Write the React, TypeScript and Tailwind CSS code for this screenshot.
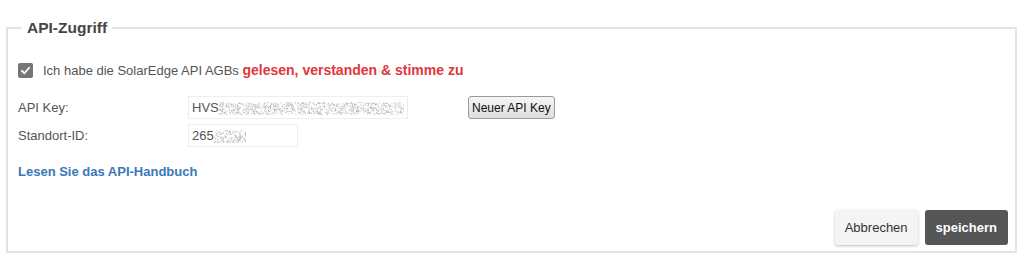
import React from "react";

// deterministic grey speckle used to hide the secret parts of the values
function Noise({ width, height, seed }: { width: number; height: number; seed: number }) {
  let s = seed;
  const rnd = () => {
    s = (s * 9301 + 49297) % 233280;
    return s / 233280;
  };
  const dots: React.ReactNode[] = [];
  const count = Math.round(width * height * 0.38);
  for (let i = 0; i < count; i++) {
    const x = rnd() * width;
    const y = 2 + rnd() * (height - 4);
    const g = Math.round(160 + rnd() * 85);
    dots.push(<rect key={i} x={x.toFixed(1)} y={y.toFixed(1)} width="1" height="1" fill={`rgb(${g},${g},${g})`} />);
  }
  return (
    <svg width={width} height={height} viewBox={`0 0 ${width} ${height}`} aria-hidden className="shrink-0">
      {dots}
    </svg>
  );
}

const App = () => {
  return (
    <div className="h-[262px] w-[1024px] bg-white pl-[6px] pr-[7px] pt-[16px] font-['Liberation_Sans',Arial,sans-serif] text-[13px] text-[#555]">
      <fieldset className="h-[237px] border-2 border-[#e3e3e3] pl-[10px] pr-[7px] pt-[21px]">
        <legend className="ml-[4px] px-[5px] text-[15.5px] font-bold text-[#444]">API-Zugriff</legend>

        {/* Zustimmung */}
        <label className="flex items-center gap-[10px]">
          <span className="grid h-[15px] w-[15px] place-items-center rounded-[2px] bg-[#767676]">
            <svg width="11" height="11" viewBox="0 0 12 12" fill="none" stroke="white" strokeWidth={2} strokeLinecap="round" strokeLinejoin="round" aria-hidden>
              <path d="M2 6.3 4.8 9 10 3" />
            </svg>
          </span>
          <span>
            Ich habe die SolarEdge API AGBs <b className="text-[14px] text-[#e0363c]">gelesen, verstanden &amp; stimme zu</b>
          </span>
        </label>

        {/* Felder */}
        <div className="mt-[15px] grid grid-cols-[170px_1fr] items-center gap-y-[5px]">
          <span>API Key:</span>
          <div className="flex items-center">
            <div className="flex h-[23px] w-[220px] items-center border border-[#eee] pl-[3px]">
              HVS
              <Noise width={185} height={16} seed={17} />
            </div>
            <button className="ml-[60px] h-[23px] rounded-[3px] border border-[#9a9a9a] bg-gradient-to-b from-[#f6f6f6] to-[#dedede] px-[3px] text-[12px] text-[#111]">
              Neuer API Key
            </button>
          </div>
          <span>Standort-ID:</span>
          <div className="flex h-[23px] w-[110px] items-center border border-[#eee] pl-[3px]">
            265
            <Noise width={32} height={16} seed={5} />
          </div>
        </div>

        <a className="mt-[15px] block font-bold text-[#3a78b8]">Lesen Sie das API-Handbuch</a>

        {/* Aktionen */}
        <div className="mt-[28px] flex justify-end gap-[7px]">
          <button className="h-[35px] rounded-[3px] bg-[#f4f4f4] px-[10px] text-[13px] text-[#333] shadow-[0_1px_3px_rgba(0,0,0,.25)]">
            Abbrechen
          </button>
          <button className="h-[35px] rounded-[3px] bg-[#555] px-[11px] text-[13px] font-bold text-white">
            speichern
          </button>
        </div>
      </fieldset>
    </div>
  );
};

export default App;
